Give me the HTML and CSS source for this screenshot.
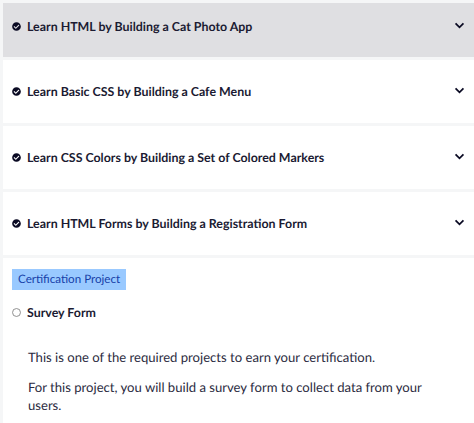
FILE: index.html
```html
<!DOCTYPE html>
<html lang="en">
<head>
    <meta charset="UTF-8">
    <meta name="viewport" content="width=device-width, initial-scale=1.0">
    <title>Curriculum</title>
    <link rel="stylesheet" href="styles.css">
</head>
<body>
    <div class="course-list">
        <div class="course-row course-row-active">
            <svg class="check-icon" viewBox="0 0 512 512"><path d="M504 256c0 137-111 248-248 248S8 393 8 256 119 8 256 8s248 111 248 248zM227 387l184-184c6-6 6-16 0-22l-23-23c-6-6-16-6-22 0L216 308l-70-70c-6-6-16-6-22 0l-23 23c-6 6-6 16 0 22l104 104c6 6 16 6 22 0z"/></svg>
            <span class="course-title">Learn HTML by Building a Cat Photo App</span>
            <svg class="chevron-icon" viewBox="0 0 12 8"><path d="M1.5 1.5 6 6l4.5-4.5"/></svg>
        </div>
        <div class="course-row">
            <svg class="check-icon" viewBox="0 0 512 512"><path d="M504 256c0 137-111 248-248 248S8 393 8 256 119 8 256 8s248 111 248 248zM227 387l184-184c6-6 6-16 0-22l-23-23c-6-6-16-6-22 0L216 308l-70-70c-6-6-16-6-22 0l-23 23c-6 6-6 16 0 22l104 104c6 6 16 6 22 0z"/></svg>
            <span class="course-title">Learn Basic CSS by Building a Cafe Menu</span>
            <svg class="chevron-icon" viewBox="0 0 12 8"><path d="M1.5 1.5 6 6l4.5-4.5"/></svg>
        </div>
        <div class="course-row">
            <svg class="check-icon" viewBox="0 0 512 512"><path d="M504 256c0 137-111 248-248 248S8 393 8 256 119 8 256 8s248 111 248 248zM227 387l184-184c6-6 6-16 0-22l-23-23c-6-6-16-6-22 0L216 308l-70-70c-6-6-16-6-22 0l-23 23c-6 6-6 16 0 22l104 104c6 6 16 6 22 0z"/></svg>
            <span class="course-title">Learn CSS Colors by Building a Set of Colored Markers</span>
            <svg class="chevron-icon" viewBox="0 0 12 8"><path d="M1.5 1.5 6 6l4.5-4.5"/></svg>
        </div>
        <div class="course-row">
            <svg class="check-icon" viewBox="0 0 512 512"><path d="M504 256c0 137-111 248-248 248S8 393 8 256 119 8 256 8s248 111 248 248zM227 387l184-184c6-6 6-16 0-22l-23-23c-6-6-16-6-22 0L216 308l-70-70c-6-6-16-6-22 0l-23 23c-6 6-6 16 0 22l104 104c6 6 16 6 22 0z"/></svg>
            <span class="course-title">Learn HTML Forms by Building a Registration Form</span>
            <svg class="chevron-icon" viewBox="0 0 12 8"><path d="M1.5 1.5 6 6l4.5-4.5"/></svg>
        </div>
    </div>
    <div class="project-panel">
        <span class="cert-badge">Certification Project</span>
        <div class="project-head">
            <svg class="radio-icon" viewBox="0 0 10 10"><circle cx="5" cy="5" r="4.4"/></svg>
            <span class="project-title">Survey Form</span>
        </div>
        <div class="project-text">
            <p>This is one of the required projects to earn your certification.</p>
            <p>For this project, you will build a survey form to collect data from your users.</p>
        </div>
    </div>
</body>
</html>
```

FILE: styles.css
```css
html, body {
    height: 100%;
    overflow: hidden;
}
body {
    margin: 0;
    background-color: #f5f6f7;
    color: #1b1b32;
    font-family: "Lato", sans-serif;
    text-rendering: geometricPrecision;
    padding: 3px 0 0 3px;
    box-sizing: border-box;
}
.course-list {
    display: flex;
    flex-direction: column;
    gap: 3px;
}
.course-row {
    display: flex;
    align-items: center;
    height: 63px;
    padding: 0 9px 1px 9px;
    box-sizing: border-box;
    background-color: #fff;
}
.course-row-active {
    height: 54px;
    padding-bottom: 8px;
    background-color: #dfdfe2;
}
.check-icon {
    width: 9px;
    height: 9px;
    margin-right: 6px;
    fill: #0a0a23;
}
.course-title {
    flex: 1;
    font-size: 12.4px;
    font-weight: 700;
}
.chevron-icon {
    width: 11px;
    height: 7px;
    margin-bottom: 1px;
    fill: none;
    stroke: #0a0a23;
    stroke-width: 2;
}
.project-panel {
    margin-top: 3px;
    padding: 11px 9px;
    height: 170px;
    box-sizing: border-box;
    background-color: #fff;
}
.cert-badge {
    display: block;
    width: fit-content;
    padding: 2px 6px;
    background-color: #99c9ff;
    color: #153ea8;
    font-size: 11.6px;
    line-height: 17px;
}
.project-head {
    display: flex;
    align-items: center;
    margin-top: 15px;
}
.project-title {
    font-size: 12.4px;
    font-weight: 700;
}
.radio-icon {
    width: 9px;
    height: 9px;
    margin-right: 6px;
    fill: #fff;
    stroke: #858585;
    stroke-width: 1;
}
.project-text {
    margin-top: 28px;
    padding: 0 30px 0 16px;
    font-size: 13.1px;
    color: #2a2a40;
}
.project-text p {
    margin: 0 0 12px;
    line-height: 18px;
}
```
